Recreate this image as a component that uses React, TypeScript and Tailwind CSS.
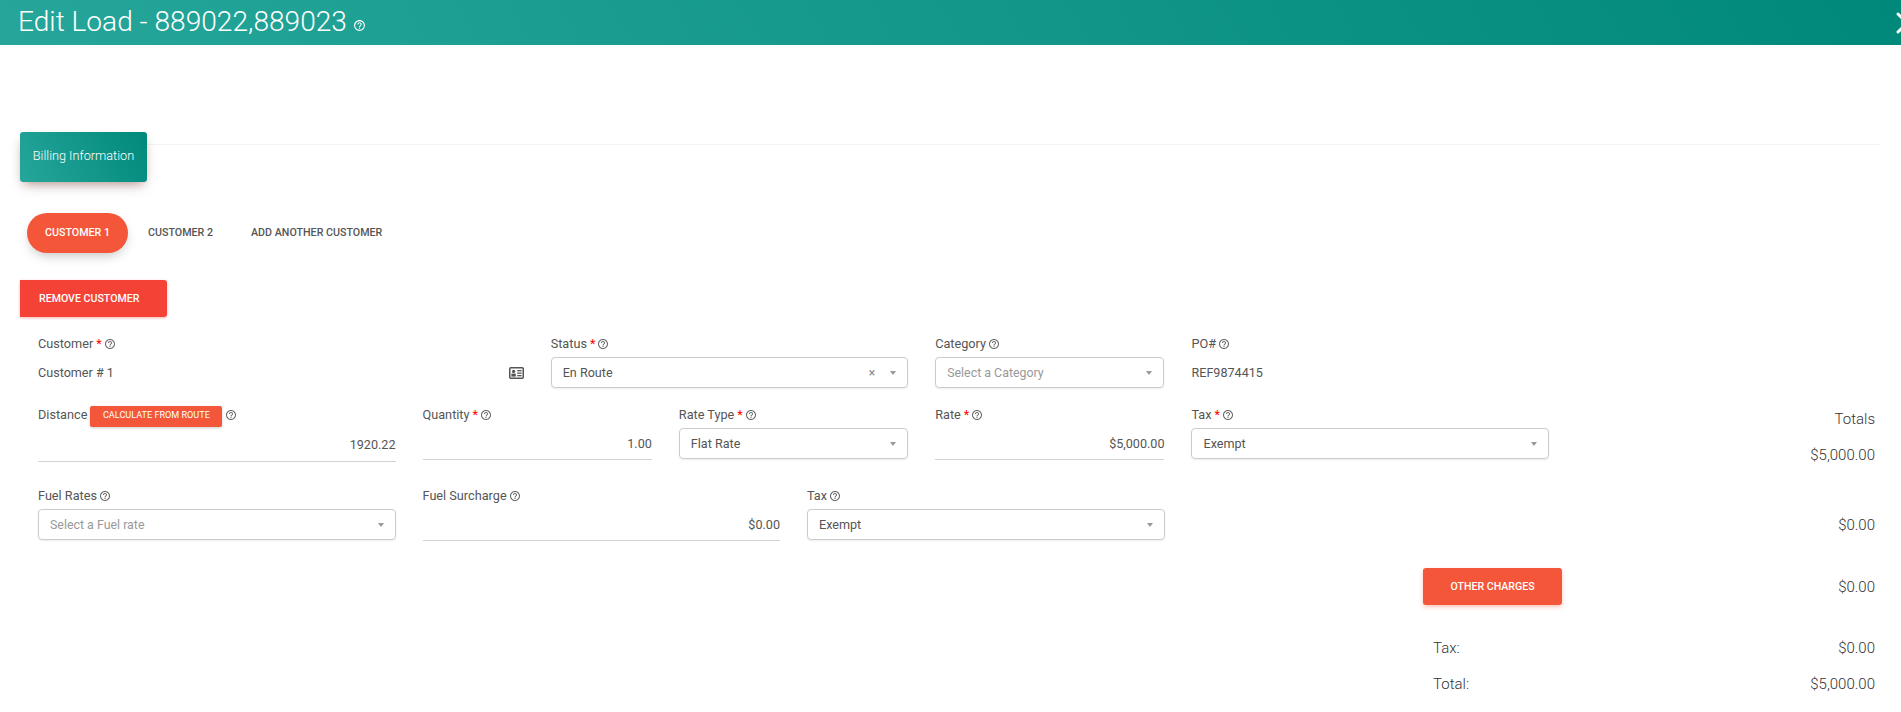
import { X } from "lucide-react";
import { MdHelpOutline } from "react-icons/md";

function Help() {
  return <MdHelpOutline size={12} className="inline-block ml-[2px] text-[#666] shrink-0" />;
}

function Label({ text, required }: { text: string; required?: boolean }) {
  return (
    <div className="h-5 flex items-center text-[12.7px] text-[#555] whitespace-nowrap">
      {text}
      {required && <span className="text-[#f00] ml-[3px]">*</span>}
      <Help />
    </div>
  );
}

function Select({ value, placeholder, clear }: { value?: string; placeholder?: string; clear?: boolean }) {
  return (
    <div className="h-[31px] flex items-center border border-[#ccc] rounded-[4px] shadow-[0_1px_2px_rgba(0,0,0,0.08)] pl-[11px] pr-[11px]">
      <span className={value ? "pt-[1px] text-[12.6px] text-[#555] flex-1" : "pt-[1px] text-[12.4px] text-[#999] flex-1"}>
        {value || placeholder}
      </span>
      {clear && <span className="text-[#888] mr-[15px] text-[12px] leading-none">×</span>}
      <span className="w-0 h-0 border-x-[3px] border-t-[4px] border-x-transparent border-t-[#999]"></span>
    </div>
  );
}

function Money({ value, height }: { value: string; height: string }) {
  return (
    <div className={`${height} pt-[1px] flex items-center justify-end border-b border-[#d2d2d2] text-[12.6px] text-[#555]`}>
      {value}
    </div>
  );
}

function Total({ children, className }: { children: React.ReactNode; className?: string }) {
  return <div className={`text-right text-[15px] leading-4 font-light text-[#333] ${className || ""}`}>{children}</div>;
}

export default function App() {
  return (
    <div className="font-['Roboto',sans-serif] bg-white min-h-screen overflow-hidden">
      <header className="h-[45px] flex items-center justify-between overflow-hidden bg-[linear-gradient(60deg,#26a69a,#00897b)] pl-[18px]">
        <div className="flex items-center text-white">
          <h1 className="text-[28.1px] font-light leading-none">Edit Load - 889022,889023</h1>
          <MdHelpOutline size={13} className="ml-[6px] mt-[6px]" />
        </div>
        <X size={36} strokeWidth={2} className="text-white shrink-0 -mr-[24px]" />
      </header>

      <div className="ml-5 mr-[21px] mt-[87px] h-[13px] border-b border-[#f3f3f3]">
        <button className="w-[127px] h-[50px] pb-[3px] rounded-[3px] bg-[linear-gradient(60deg,#26a69a,#00897b)] text-white text-[12.7px] font-light shadow-[0_6px_14px_-4px_rgba(0,0,0,0.3),0_4px_8px_-3px_rgba(244,81,54,0.3)]">
          Billing Information
        </button>
      </div>

      <nav className="ml-[27px] mt-[68px] flex items-center gap-[2px] text-[10.7px] font-medium">
        <button className="h-10 w-[101px] rounded-full bg-[#f4563a] text-white shadow-[0_5px_12px_-3px_rgba(0,0,0,0.25)]">
          CUSTOMER 1
        </button>
        <button className="h-10 px-[18px] text-[#555]">CUSTOMER 2</button>
        <button className="h-10 px-[18px] text-[#555]">ADD ANOTHER CUSTOMER</button>
      </nav>

      <button className="block ml-5 mt-[27px] w-[147px] h-[37px] pl-[19px] text-left rounded-r-[3px] bg-[#f44336] text-white text-[10.6px] font-medium shadow-[0_1px_3px_rgba(244,67,54,0.4)]">
        REMOVE CUSTOMER
      </button>

      <section className="pl-[38px] pr-[26px] mt-[17px]">
        <div className="w-[1511px] grid grid-cols-12 gap-x-[27px]">
          <div className="col-span-4">
            <div className="mb-[3px]"><Label text="Customer" required /></div>
            <div className="h-[31px] pt-[1px] flex items-center justify-between text-[12.6px] text-[#555]">
              <span>Customer # 1</span>
              <svg width="15" height="12" viewBox="0 0 15 12" className="text-[#555]">
                <rect x="0.75" y="0.75" width="13.5" height="10.5" rx="1" fill="none" stroke="currentColor" strokeWidth="1.5" />
                <circle cx="4.6" cy="4.4" r="1.6" fill="currentColor" />
                <rect x="2.4" y="6.6" width="4.4" height="3" fill="currentColor" />
                <rect x="8.2" y="3" width="4.4" height="1.3" fill="currentColor" />
                <rect x="8.2" y="5.5" width="4.4" height="1.3" fill="currentColor" />
                <rect x="8.2" y="8" width="4.4" height="1.3" fill="currentColor" />
              </svg>
            </div>
          </div>
          <div className="col-span-3">
            <div className="mb-[3px]"><Label text="Status" required /></div>
            <Select value="En Route" clear />
          </div>
          <div className="col-span-2">
            <div className="mb-[3px]"><Label text="Category" /></div>
            <Select placeholder="Select a Category" />
          </div>
          <div className="col-span-3">
            <div className="mb-[3px]"><Label text="PO#" /></div>
            <div className="h-[31px] pt-[1px] flex items-center text-[12.6px] text-[#555]">REF9874415</div>
          </div>
        </div>

        <div className="flex mt-[17px]">
          <div className="w-[1511px] shrink-0 grid grid-cols-12 gap-x-[27px]">
            <div className="col-span-3">
              <div className="mb-[3px] h-5 flex items-center text-[12.7px] text-[#555]">
                Distance
                <button className="ml-[3px] mt-[2px] w-[132px] h-[21px] rounded-[2px] bg-[#f4563a] text-white text-[9.1px] shadow-[0_1px_3px_rgba(0,0,0,0.2)]">
                  CALCULATE FROM ROUTE
                </button>
                <span className="ml-[1px] flex"><Help /></span>
              </div>
              <Money value="1920.22" height="h-[34px]" />
            </div>
            <div className="col-span-2">
              <div className="mb-[3px]"><Label text="Quantity" required /></div>
              <Money value="1.00" height="h-[32px]" />
            </div>
            <div className="col-span-2">
              <div className="mb-[3px]"><Label text="Rate Type" required /></div>
              <Select value="Flat Rate" />
            </div>
            <div className="col-span-2">
              <div className="mb-[3px]"><Label text="Rate" required /></div>
              <Money value="$5,000.00" height="h-[32px]" />
            </div>
            <div className="col-span-3">
              <div className="mb-[3px]"><Label text="Tax" required /></div>
              <Select value="Exempt" />
            </div>
          </div>
          <div className="flex-1 pt-[6px]">
            <Total>Totals</Total>
            <Total className="mt-[20px]">$5,000.00</Total>
          </div>
        </div>

        <div className="flex mt-[23px]">
          <div className="w-[1511px] shrink-0 grid grid-cols-12 gap-x-[27px]">
            <div className="col-span-3">
              <div className="mb-[3px]"><Label text="Fuel Rates" /></div>
              <Select placeholder="Select a Fuel rate" />
            </div>
            <div className="col-span-3">
              <div className="mb-[3px]"><Label text="Fuel Surcharge" /></div>
              <Money value="$0.00" height="h-[32px]" />
            </div>
            <div className="col-span-3">
              <div className="mb-[3px]"><Label text="Tax" /></div>
              <Select value="Exempt" />
            </div>
          </div>
          <div className="flex-1 pt-[31px]">
            <Total>$0.00</Total>
          </div>
        </div>

        <div className="flex items-center justify-end mt-[27px]">
          <button className="w-[139px] h-[37px] rounded-[3px] bg-[#f4563a] text-white text-[10.6px] font-medium shadow-[0_2px_4px_rgba(244,86,58,0.35)]">
            OTHER CHARGES
          </button>
          <Total className="w-[313px]">$0.00</Total>
        </div>

        <div className="ml-auto w-[442px] mt-[25px] text-[15px] font-light text-[#333]">
          <div className="h-[36px] flex items-center justify-between"><span>Tax:</span><span>$0.00</span></div>
          <div className="h-[37px] flex items-center justify-between"><span>Total:</span><span>$5,000.00</span></div>
        </div>
      </section>
    </div>
  );
}
